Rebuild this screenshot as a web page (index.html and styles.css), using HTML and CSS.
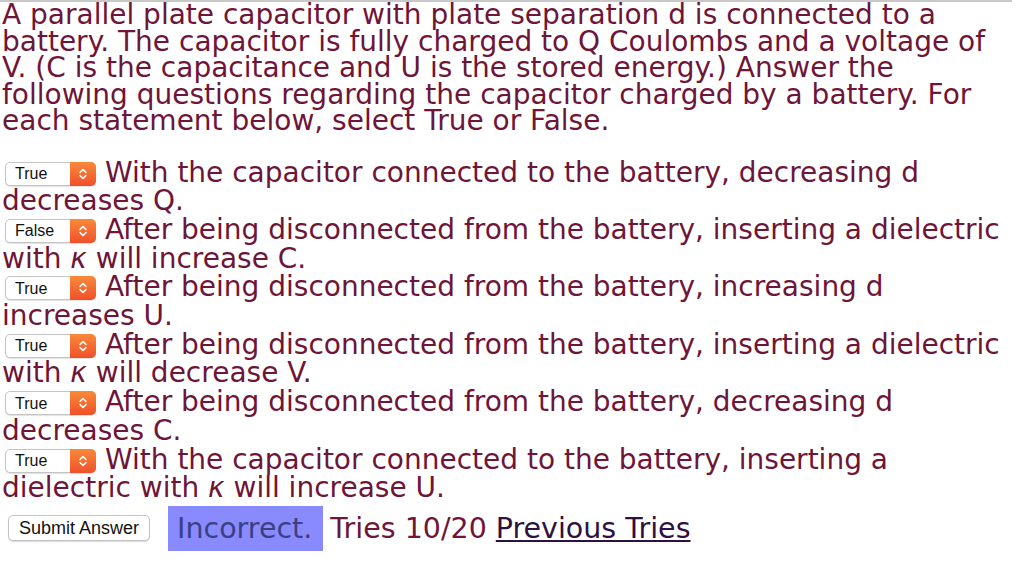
FILE: index.html
```html
<!DOCTYPE html>
<html lang="en">
<head>
  <meta charset="UTF-8" />
  <meta name="viewport" content="width=device-width, initial-scale=1.0" />
  <title>Capacitor Question</title>
  <link rel="stylesheet" href="styles.css">
</head>
<body>
  <div class="problem">
    <p class="intro">A parallel plate capacitor with plate separation d is connected to a battery. The capacitor is fully charged to Q Coulombs and a voltage of V. (C is the capacitance and U is the stored energy.) Answer the following questions regarding the capacitor charged by a battery. For each statement below, select True or False.</p>

    <div class="questions">
      <div class="question">
        <span class="pick"><select><option selected>True</option><option>False</option></select><span class="arrow"><svg width="10" height="14" viewBox="0 0 10 14"><path d="M2 5.5 L5 2.5 L8 5.5 M2 8.5 L5 11.5 L8 8.5" fill="none" stroke="#fff" stroke-width="1.6" stroke-linecap="round" stroke-linejoin="round"/></svg></span></span>
        With the capacitor connected to the battery, decreasing d decreases Q.
      </div>
      <div class="question">
        <span class="pick"><select><option>True</option><option selected>False</option></select><span class="arrow"><svg width="10" height="14" viewBox="0 0 10 14"><path d="M2 5.5 L5 2.5 L8 5.5 M2 8.5 L5 11.5 L8 8.5" fill="none" stroke="#fff" stroke-width="1.6" stroke-linecap="round" stroke-linejoin="round"/></svg></span></span>
        After being disconnected from the battery, inserting a dielectric with <i>κ</i> will increase C.
      </div>
      <div class="question">
        <span class="pick"><select><option selected>True</option><option>False</option></select><span class="arrow"><svg width="10" height="14" viewBox="0 0 10 14"><path d="M2 5.5 L5 2.5 L8 5.5 M2 8.5 L5 11.5 L8 8.5" fill="none" stroke="#fff" stroke-width="1.6" stroke-linecap="round" stroke-linejoin="round"/></svg></span></span>
        After being disconnected from the battery, increasing d increases U.
      </div>
      <div class="question">
        <span class="pick"><select><option selected>True</option><option>False</option></select><span class="arrow"><svg width="10" height="14" viewBox="0 0 10 14"><path d="M2 5.5 L5 2.5 L8 5.5 M2 8.5 L5 11.5 L8 8.5" fill="none" stroke="#fff" stroke-width="1.6" stroke-linecap="round" stroke-linejoin="round"/></svg></span></span>
        After being disconnected from the battery, inserting a dielectric with <i>κ</i> will decrease V.
      </div>
      <div class="question">
        <span class="pick"><select><option selected>True</option><option>False</option></select><span class="arrow"><svg width="10" height="14" viewBox="0 0 10 14"><path d="M2 5.5 L5 2.5 L8 5.5 M2 8.5 L5 11.5 L8 8.5" fill="none" stroke="#fff" stroke-width="1.6" stroke-linecap="round" stroke-linejoin="round"/></svg></span></span>
        After being disconnected from the battery, decreasing d decreases C.
      </div>
      <div class="question">
        <span class="pick"><select><option selected>True</option><option>False</option></select><span class="arrow"><svg width="10" height="14" viewBox="0 0 10 14"><path d="M2 5.5 L5 2.5 L8 5.5 M2 8.5 L5 11.5 L8 8.5" fill="none" stroke="#fff" stroke-width="1.6" stroke-linecap="round" stroke-linejoin="round"/></svg></span></span>
        With the capacitor connected to the battery, inserting a dielectric with <i>κ</i> will increase U.
      </div>
    </div>

    <div class="answer-row">
      <button class="submit">Submit Answer</button>
      <span class="result">Incorrect.</span>
      <span class="tries">Tries 10/20</span>
      <a class="prev" href="#">Previous Tries</a>
    </div>
  </div>
</body>
</html>
```

FILE: styles.css
```css
body {
  margin: 0;
  background: #fff;
  color: #6e1538;
  font-family: "DejaVu Sans", Verdana, sans-serif;
}
.problem {
  border-top: 2px solid #c8c8c8;
  padding: 0 0 0 2px;
  max-width: 1010px;
}
.intro {
  margin: 0;
  font-size: 28px;
  line-height: 26.5px;
}
.questions {
  margin-top: 24px;
}
.question {
  font-size: 28px;
  line-height: 28.7px;
}
.question i {
  display: inline-block;
  font-style: italic;
  line-height: 20px;
}
.pick {
  position: relative;
  display: inline-block;
  vertical-align: middle;
  height: 24px;
  margin-left: 3px;
}
.pick select {
  appearance: none;
  -webkit-appearance: none;
  display: block;
  width: 91px;
  height: 24px;
  padding: 0 0 0 9px;
  border: 1px solid #c4c4c4;
  border-radius: 5px;
  background: #fff;
  box-shadow: 0 1px 1px rgba(0, 0, 0, 0.12);
  font-family: "Liberation Sans", Arial, sans-serif;
  font-size: 16px;
  color: #111;
}
.arrow {
  position: absolute;
  top: 0;
  right: 0;
  width: 26px;
  height: 24px;
  border-radius: 0 5px 5px 0;
  background: linear-gradient(to bottom, #f98a3a, #f0502a);
  display: flex;
  align-items: center;
  justify-content: center;
  pointer-events: none;
}
.answer-row {
  display: flex;
  align-items: center;
  margin-top: 3px;
  font-size: 28.5px;
}
.submit {
  width: 142px;
  margin: 0 18px 0 6px;
  height: 26px;
  padding: 0;
  border: 1px solid #c4c4c4;
  border-radius: 5px;
  background: #fff;
  box-shadow: 0 1px 1px rgba(0, 0, 0, 0.15);
  font-family: "Liberation Sans", Arial, sans-serif;
  font-size: 18px;
  color: #111;
}
.result {
  background: #8a8aff;
  color: #3b3f85;
  padding: 6px 11px 6px 9px;
}
.tries {
  margin-left: 7px;
}
.prev {
  margin-left: 9px;
  color: #2e1140;
  text-decoration: underline;
}
```
